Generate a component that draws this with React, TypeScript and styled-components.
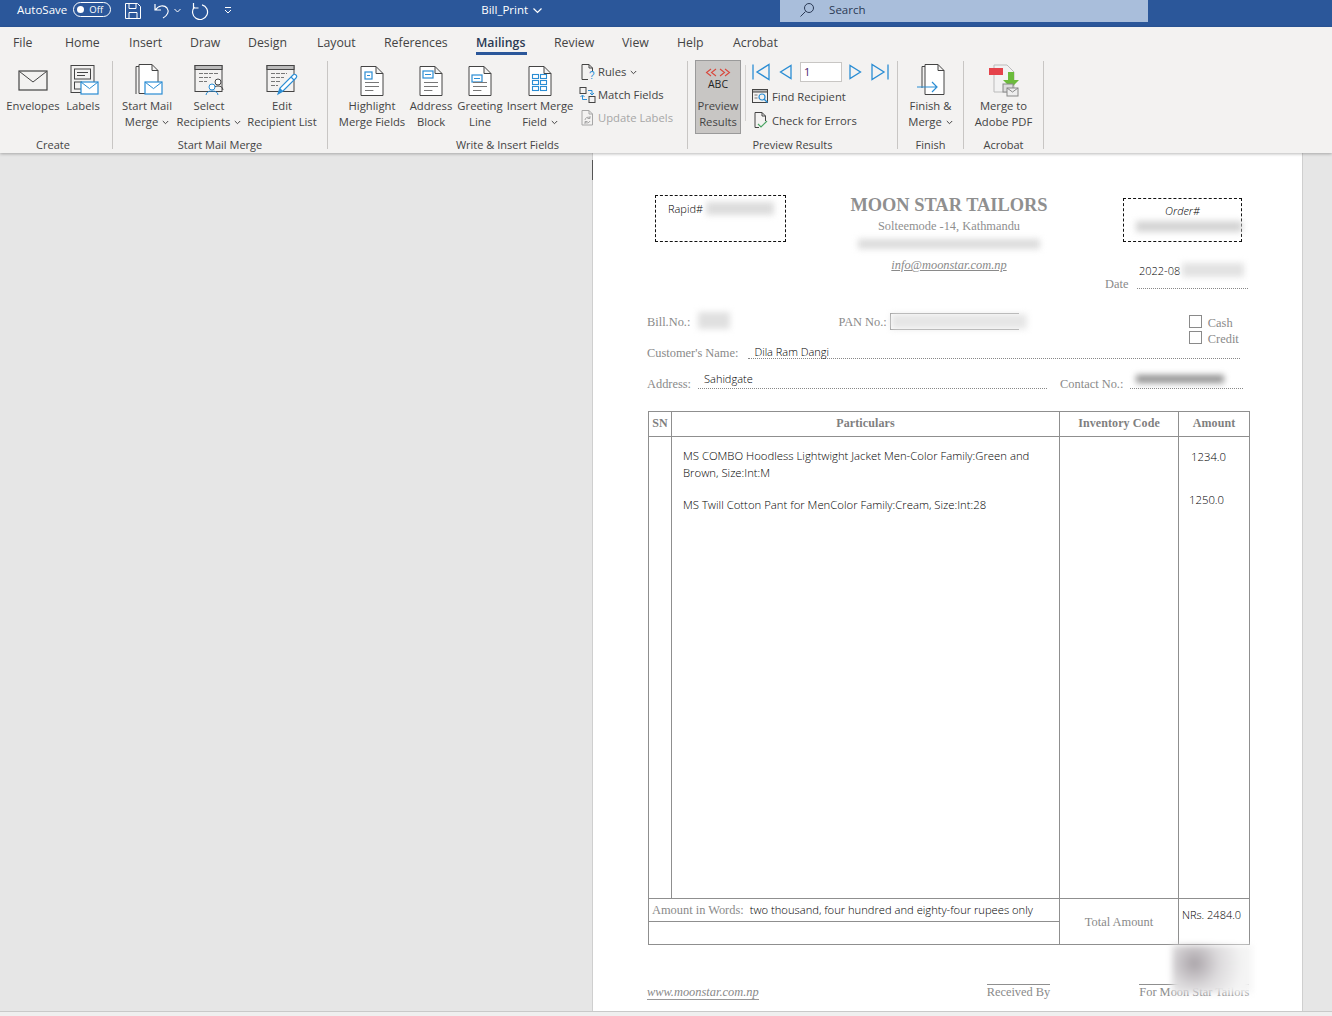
import React from "react";
import styled, { createGlobalStyle } from "styled-components";

const Global = createGlobalStyle`
  html, body { margin: 0; padding: 0; width: 1332px; height: 1016px; overflow: hidden; background: #e6e6e6; }
  * { box-sizing: border-box; }
`;
const UI = `"Open Sans", "Noto Sans", "Liberation Sans", sans-serif`;
const SERIF = `"Liberation Serif", "Times New Roman", serif`;
const INK = "#444";
const BLUE = "#2a8dd4";

const Shell = styled.div`
  width: 1332px; height: 1016px; display: flex; flex-direction: column; font-family: ${UI};
  overflow: hidden; background: #e6e6e6;
`;
const TitleBar = styled.header`
  height: 27px; flex: none; background: #2b579a; color: #fff; display: flex; align-items: flex-start;
  font-size: 11.5px; position: relative;
`;
const QuickText = styled.span<{ $ml: number }>`margin-left: ${(p) => p.$ml}px; line-height: 19px; white-space: nowrap;`;
const Toggle = styled.span`
  margin: 2px 0 0 6px; width: 38px; height: 15px; border: 1.2px solid #fff; border-radius: 8px;
  display: flex; align-items: center; padding-left: 3px; font-size: 9.5px; gap: 5px; flex: none;
`;
const Knob = styled.i`width: 7px; height: 7px; border-radius: 50%; background: #fff; display: block;`;
const QuickIcon = styled.svg<{ $ml: number; $w: number }>`
  margin: 2px 0 0 ${(p) => p.$ml}px; width: ${(p) => p.$w}px; height: 18px; flex: none;
`;
const SearchBox = styled.div`
  margin-left: 238px; width: 368px; height: 22px; background: #a9bedb; color: #2b3a55; display: flex;
  align-items: center; padding: 0 0 3px 19px; gap: 14px; font-size: 11.5px; flex: none;
`;

const Ribbon = styled.section`
  height: 126px; flex: none; background: #f3f2f1; box-shadow: 0 1px 3px rgba(0,0,0,.28); position: relative; z-index: 2;
`;
const Tabs = styled.nav`display: flex; height: 34px; padding-left: 13px; font-size: 12.3px; color: #444;`;
const Tab = styled.span<{ $w: number; $active?: boolean }>`
  width: ${(p) => p.$w}px; flex: none; line-height: 31px; position: relative; white-space: nowrap;
  font-weight: ${(p) => (p.$active ? 600 : 400)}; color: ${(p) => (p.$active ? "#2b3a55" : "#444")};
  ${(p) => p.$active && `&::after { content: ""; position: absolute; left: 0; top: 25px; width: 51px; height: 3px; background: #2b579a; }`}
`;
const Groups = styled.div`display: flex; height: 92px;`;
const Group = styled.div<{ $w: number }>`
  width: ${(p) => p.$w}px; flex: none; height: 88px; border-right: 1px solid #c8c6c4; display: flex; flex-direction: column;
`;
const GroupBody = styled.div`height: 77px; display: flex; flex: none;`;
const GroupLabel = styled.div<{ $pr?: number }>`
  text-align: center; font-size: 11px; line-height: 14px; color: #444; white-space: nowrap;
  padding-right: ${(p) => p.$pr ?? 0}px;
`;
const Big = styled.div<{ $w: number }>`
  width: ${(p) => p.$w}px; flex: none; display: flex; flex-direction: column; align-items: center;
  font-size: 11.25px; line-height: 16px; color: #444; white-space: nowrap; padding-top: 2px;
`;
const BigIcon = styled.svg`width: 36px; height: 34px; margin-bottom: 1px; flex: none;`;
const Chev = styled.svg`width: 7px; height: 5px; margin-left: 4px; vertical-align: 1px;`;
const SmallCol = styled.div<{ $ml: number }>`
  margin: -1px 0 0 ${(p) => p.$ml}px; display: flex; flex-direction: column; flex: none;
`;
const SmallRow = styled.div<{ $off?: boolean; $h?: number; $gap?: number }>`
  height: ${(p) => p.$h ?? 23}px; display: flex; align-items: center; gap: ${(p) => p.$gap ?? 2}px; font-size: 11.25px; white-space: nowrap;
  color: ${(p) => (p.$off ? "#a6a6a6" : "#444")};
`;
const SmallIcon = styled.svg`width: 17px; height: 18px; flex: none;`;
const PreviewBtn = styled.div`
  margin: -1px 0 0 7px; width: 46px; height: 74px; background: #c8c6c4; border: 1px solid #9a9a9a; flex: none;
  display: flex; flex-direction: column; align-items: center; font-size: 11.25px; line-height: 16px; color: #444; padding-top: 7px;
`;
const Abc = styled.span`font-size: 10.5px; line-height: 12px; color: #222; margin: 1px 0 8px;`;
const ThinSep = styled.i`display: block; width: 1px; height: 56px; margin: 4px 0 0 4px; background: #d5d3d1; flex: none;`;
const NavRow = styled.div`height: 24px; display: flex; align-items: center;`;
const NavIcon = styled.svg<{ $w: number; $ml: number }>`
  width: ${(p) => p.$w}px; margin-left: ${(p) => p.$ml}px; height: 18px; flex: none;
`;
const NavInput = styled.div`
  margin-left: 8px; width: 42px; height: 20px; background: #fff; border: 1px solid #c8c6c4; font-size: 11px;
  line-height: 18px; padding-left: 3px; color: #4b1d6b; flex: none;
`;

const Workspace = styled.main`flex: 1; display: flex; background: #e6e6e6; min-height: 0; padding-left: 592px;`;
const Page = styled.article`
  width: 711px; height: 858px; background: #fff; border-left: 1px solid #cfcfcf; border-right: 1px solid #cfcfcf; padding-left: 55px;
  flex: none; position: relative; font-family: ${SERIF}; font-size: 12.4px; color: #8a8a8a;
`;
const Ruler = styled.i`position: absolute; left: -1px; top: 7px; width: 1px; height: 20px; background: #555;`;
const StatusBar = styled.footer`height: 5px; flex: none; background: #efefef; border-top: 1px solid #c9c9c9; position: relative; z-index: 2;`;

const DocHead = styled.div`display: flex; height: 150px; width: 602px;`;
const DocLeft = styled.div`width: 138px; flex: none; padding: 42px 0 0 7px;`;
const Dashed = styled.div<{ $w: number; $h: number; $center?: boolean; $ml?: number }>`
  width: ${(p) => p.$w}px; height: ${(p) => p.$h}px; margin-left: ${(p) => p.$ml ?? 0}px; border: 1px dashed #111;
  font-family: ${UI}; font-weight: 300; font-size: 11px; color: #000;
  padding: ${(p) => (p.$center ? "4px 0 0 0" : "5px 0 0 12px")};
  display: flex; ${(p) => (p.$center ? "flex-direction: column; align-items: center;" : "align-items: flex-start;")}
`;
const Blur = styled.span<{ $w: number; $h: number; $ml?: number; $mt?: number; $c?: string }>`
  display: block; width: ${(p) => p.$w}px; height: ${(p) => p.$h}px; margin-left: ${(p) => p.$ml ?? 0}px; margin-top: ${(p) => p.$mt ?? 0}px;
  background: ${(p) => p.$c ?? "#dcdcdc"}; filter: blur(3px); flex: none;
`;
const DocCenter = styled.div`
  width: 314px; flex: none; padding: 41px 0 0 12px; display: flex; flex-direction: column; align-items: center;
`;
const Brand = styled.h1`margin: 0; font: bold 18.4px/22px ${SERIF}; color: #8f8f8f; white-space: nowrap;`;
const Addr = styled.div`line-height: 14px; margin-top: 3px; color: #8f8f8f;`;
const Mail = styled.div`font-style: italic; line-height: 14px; margin-top: 9px; text-decoration: underline; color: #8a8a8a;`;
const DocRight = styled.div`width: 150px; flex: none; padding-top: 45px;`;
const DateRow = styled.div`display: flex; align-items: flex-end; margin-top: 21px;`;
const DateLabel = styled.span`margin: 0 0 -2px 5px; width: 32px; line-height: 14px;`;
const DateField = styled.div`
  width: 111px; height: 26px; border-bottom: 1px dotted #888; display: flex; font-family: ${UI}; font-weight: 300;
  font-size: 11px; color: #000; padding-left: 2px; line-height: 16px; white-space: nowrap;
`;

const BillRow = styled.div`display: flex; height: 38px; width: 602px; padding-top: 12px; margin-left: -1px;`;
const Lbl = styled.span<{ $ml?: number; $drop?: number }>`
  margin-left: ${(p) => p.$ml ?? 0}px; white-space: nowrap; line-height: 14px; flex: none;
  margin-bottom: ${(p) => -(p.$drop ?? 0)}px;
`;
const PanBox = styled.div`
  width: 129px; height: 17px; margin: -2px 0 0 3px; border-top: 1px solid #999; border-bottom: 1px solid #999; border-left: 1px solid #999; flex: none;
`;
const CheckCol = styled.div<{ $ml: number }>`
  margin: 0 0 0 ${(p) => p.$ml}px; display: flex; flex-direction: column; gap: 3px; flex: none;
`;
const CheckLine = styled.div`display: flex; gap: 6px; height: 13px; line-height: 13px;`;
const CheckText = styled.span`margin-top: 2px;`;
const Box = styled.i`display: block; width: 13px; height: 13px; border: 1px solid #8a8a8a; flex: none;`;
const FieldRow = styled.div<{ $mt?: number }>`
  display: flex; width: 600px; margin: ${(p) => p.$mt ?? 0}px 0 0 -1px; align-items: flex-end;
`;
const Dots = styled.div<{ $w: number; $ml: number; $pt?: number; $pl?: number }>`
  width: ${(p) => p.$w}px; margin-left: ${(p) => p.$ml}px; flex: none; border-bottom: 1px dotted #888; height: 18px;
  padding: ${(p) => p.$pt ?? 0}px 0 0 ${(p) => p.$pl ?? 0}px;
  font-family: ${UI}; font-weight: 300; font-size: 11px; line-height: 15px; color: #000; white-space: nowrap; display: flex;
`;

const Sheet = styled.div`
  margin-top: 22px; width: 602px; height: 534px; border: 1px solid #8f8f8f; display: grid;
  grid-template-columns: 23px 388px 119px 1fr; grid-template-rows: 25px 462px 1fr;
`;
const Cell = styled.div<{ $head?: boolean; $end?: boolean }>`
  border-right: ${(p) => (p.$end ? "none" : "1px solid #8f8f8f")};
  border-bottom: 1px solid #8f8f8f;
  ${(p) => p.$head && `font-weight: bold; font-size: 12px; text-align: center; line-height: 23px; color: #7f7f7f; letter-spacing: .1px;`}
`;
const ItemText = styled.div<{ $mt: number; $ml: number }>`
  font-family: ${UI}; font-weight: 300; font-size: 11.33px; line-height: 17px; color: #000;
  margin: ${(p) => p.$mt}px 10px 0 ${(p) => p.$ml}px;
`;
const WordsCell = styled.div`
  grid-column: 1 / span 2; border-right: 1px solid #8f8f8f; display: grid; grid-template-rows: 23px 1fr;
`;
const WordsLine = styled.div`border-bottom: 1px solid #8f8f8f; padding-left: 3px; line-height: 22px; white-space: nowrap; display: flex; gap: 6px;`;
const Ink = styled.span`font-family: ${UI}; font-weight: 300; font-size: 11.2px; color: #000;`;
const TotalCell = styled.div`border-right: 1px solid #8f8f8f; text-align: center; line-height: 46px;`;
const NrsCell = styled.div`font-family: ${UI}; font-weight: 300; font-size: 11px; color: #000; padding: 8px 0 0 3px; white-space: nowrap;`;

const DocFoot = styled.div`display: flex; width: 603px; margin: 39px 0 0 -1px; align-items: flex-start;`;
const Site = styled.span`font-style: italic; margin-top: 1px; border-bottom: 1px solid #999; line-height: 14px; flex: none;`;
const Sign = styled.span<{ $ml: number }>`margin-left: ${(p) => p.$ml}px; border-top: 1px solid #8f8f8f; padding-top: 1px; line-height: 13px; white-space: nowrap; flex: none;`;
const Signature = styled.div`
  position: absolute; left: 579px; top: 792px; width: 80px; height: 48px; filter: blur(3px);
  background: radial-gradient(circle at 28% 38%, #aaa4a9 0, #dcdadc 38%, #f4f4f4 75%);
`;

const S = { fill: "none", stroke: INK, strokeWidth: 1 } as const;
const B = { fill: "none", stroke: BLUE, strokeWidth: 1 } as const;
const Down = () => (
  <Chev viewBox="0 0 7 5"><path d="M.8 1l2.7 2.7L6.2 1" {...S} /></Chev>
);
const Page1 = ({ x = 8, w = 22 }: { x?: number; w?: number }) => (
  <path d={`M${x} 3.5h${w - 7}l7 7v22h-${w}z M${x + w - 7} 3.5v7h7`} fill="#fff" stroke={INK} />
);
const Env = ({ x, y, w = 17, h = 12 }: { x: number; y: number; w?: number; h?: number }) => (
  <g>
    <rect x={x} y={y} width={w} height={h} fill="#fff" stroke={BLUE} strokeWidth="1.2" />
    <path d={`M${x} ${y}l${w / 2} ${h * 0.55}l${w / 2} -${h * 0.55}`} {...B} />
  </g>
);
const Lines = ({ x, ys, w }: { x: number; ys: number[]; w: number }) => (
  <g>{ys.map((y, i) => <path key={i} d={`M${x} ${y}h${i === ys.length - 1 ? w * 0.6 : w}`} {...S} stroke="#777" />)}</g>
);

const FieldDoc = ({ bx, by, bw }: { bx: number; by: number; bw: number }) => (
  <BigIcon viewBox="0 0 36 34">
    <Page1 x={7} />
    <rect x={bx} y={by} width={bw} height="7" fill="#fff" stroke={BLUE} strokeWidth="1.2" />
    <path d={`M${bx + 2} ${by + 3.5}h${bw - 4}`} {...B} />
    <Lines x={11} ys={[19.5, 23.5, 27.5]} w={14} />
  </BigIcon>
);

export default function App() {
  return (
    <Shell>
      <Global />
      <TitleBar>
        <QuickText $ml={17}>AutoSave</QuickText>
        <Toggle><Knob />Off</Toggle>
        <QuickIcon $ml={14} $w={16} viewBox="0 0 16 18" fill="none" stroke="#fff">
          <path d="M.5 1.5h12l3 3v12H.5z M4 1.5v5h7v-5 M4 16.5v-6h8v6" />
        </QuickIcon>
        <QuickIcon $ml={13} $w={16} viewBox="0 0 16 18" fill="none" stroke="#fff" strokeWidth="1.2">
          <path d="M1 2v6h6 M1.5 8C4 3.5 10 2.5 13 6c2.5 3.5.5 7.5-4 10" />
        </QuickIcon>
        <QuickIcon $ml={4} $w={7} viewBox="0 0 7 18" fill="none" stroke="#fff"><path d="M.5 7l3 3 3-3" /></QuickIcon>
        <QuickIcon $ml={10} $w={18} viewBox="0 0 18 18" fill="none" stroke="#fff" strokeWidth="1.2">
          <path d="M2.500 1v5h5 M3.500 5A7.500 7.500 0 1 0 11 2.800" />
        </QuickIcon>
        <QuickIcon $ml={15} $w={8} viewBox="0 0 8 18" fill="none" stroke="#fff"><path d="M1 5.5h6 M1 8l3 3 3-3" /></QuickIcon>
        <QuickText $ml={249}>Bill_Print</QuickText>
        <QuickIcon $ml={5} $w={9} viewBox="0 0 9 18" fill="none" stroke="#fff" strokeWidth="1.2"><path d="M.5 6.5l4 4 4-4" /></QuickIcon>
        <SearchBox>
          <svg width="16" height="16" viewBox="0 0 16 16" fill="none" stroke="#2b3a55"><circle cx="10" cy="6" r="4.5" /><path d="M6.5 9.5L1.5 14.5" /></svg>
          Search
        </SearchBox>
      </TitleBar>

      <Ribbon>
        <Tabs>
          <Tab $w={52}>File</Tab><Tab $w={64}>Home</Tab><Tab $w={61}>Insert</Tab><Tab $w={58}>Draw</Tab>
          <Tab $w={69}>Design</Tab><Tab $w={67}>Layout</Tab><Tab $w={92}>References</Tab>
          <Tab $w={78} $active>Mailings</Tab><Tab $w={68}>Review</Tab><Tab $w={55}>View</Tab>
          <Tab $w={56}>Help</Tab><Tab $w={60}>Acrobat</Tab>
        </Tabs>
        <Groups>
          <Group $w={113}>
            <GroupBody>
              <Big $w={66}>
                <BigIcon viewBox="0 0 36 34"><rect x="4" y="8" width="28" height="19" {...S} strokeWidth="1.2" /><path d="M4.5 8.5L18 19 31.5 8.5" {...S} /></BigIcon>
                Envelopes
              </Big>
              <Big $w={34}>
                <BigIcon viewBox="0 0 36 34">
                  <rect x="6" y="2.5" width="23" height="27" {...S} /><rect x="9.5" y="6" width="16" height="10" {...S} />
                  <path d="M12 9.5h11 M12 12.5h8" {...S} /><rect x="9.5" y="19" width="7" height="7" {...S} />
                  <Env x={16} y={19} w={17} h={12} />
                </BigIcon>
                Labels
              </Big>
            </GroupBody>
            <GroupLabel $pr={6}>Create</GroupLabel>
          </Group>
          <Group $w={215}>
            <GroupBody>
              <Big $w={68}>
                <BigIcon viewBox="0 0 36 34">
                  <path d="M7 31V3.5h3" {...S} /><path d="M10 1.5h13l6 6v23H10z M23 1.5v6h6" fill="#fff" stroke={INK} />
                  <Env x={16} y={19} w={17} h={12} />
                </BigIcon>
                Start Mail<span>Merge<Down /></span>
              </Big>
              <Big $w={56}>
                <BigIcon viewBox="0 0 36 34">
                  <rect x="4" y="2.5" width="27" height="26" {...S} /><rect x="4" y="2.5" width="27" height="4" fill="#bbb" stroke={INK} />
                  <path d="M8 10.5h19 M8 14.5h12 M8 18.5h8" stroke="#777" strokeDasharray="4 1" fill="none" />
                  <circle cx="27" cy="19" r="3" fill="#fff" stroke={INK} /><path d="M22 27c.5-3 2-4 5-4s4.500 1 5 4" {...S} />
                  <circle cx="21" cy="24" r="3" fill="#fff" stroke={BLUE} /><path d="M15 32c.5-3 2.500-4 6-4s5.500 1 6 4" {...B} />
                </BigIcon>
                Select<span>Recipients<Down /></span>
              </Big>
              <Big $w={90}>
                <BigIcon viewBox="0 0 36 34">
                  <rect x="3" y="2.5" width="27" height="26" {...S} /><rect x="3" y="2.5" width="27" height="4" fill="#bbb" stroke={INK} />
                  <path d="M7 10.5h16 M7 14.500h13 M7 18.500h10 M7 22.500h7" stroke="#777" strokeDasharray="4 1" fill="none" />
                  <path d="M14 31l2-6 13-13c2-2 5 1 3 3L19 28z M27 14l3 3" fill="#fff" stroke={BLUE} strokeWidth="1.1" />
                  <path d="M14 31l2-6 3 3z" fill={BLUE} />
                </BigIcon>
                Edit<span>Recipient List</span>
              </Big>
            </GroupBody>
            <GroupLabel>Start Mail Merge</GroupLabel>
          </Group>
          <Group $w={360}>
            <GroupBody>
              <Big $w={88}>
                <FieldDoc bx={11} by={9} bw={7} />
                Highlight<span>Merge Fields</span>
              </Big>
              <Big $w={30}>
                <FieldDoc bx={10} by={8} bw={10} />
                Address<span>Block</span>
              </Big>
              <Big $w={68}>
                <FieldDoc bx={10} by={12} bw={10} />
                Greeting<span>Line</span>
              </Big>
              <Big $w={52}>
                <BigIcon viewBox="0 0 36 34">
                  <Page1 x={7} />
                  <g fill="none" stroke={BLUE} strokeWidth="1.1">
                    <rect x="10.500" y="11.500" width="6" height="4" /><rect x="18.500" y="11.500" width="6" height="4" />
                    <rect x="10.500" y="17.500" width="6" height="4" /><rect x="18.500" y="17.500" width="6" height="4" />
                    <rect x="10.500" y="23.500" width="6" height="4" /><rect x="18.500" y="23.500" width="6" height="4" />
                  </g>
                </BigIcon>
                Insert Merge<span>Field<Down /></span>
              </Big>
              <SmallCol $ml={13}>
                <SmallRow $h={23}>
                  <SmallIcon viewBox="0 0 17 18"><path d="M3 1.500h7l3.500 3.500v3 M3 1.500v15h6 M10 1.500v3.500h3.500" {...S} /><text x="10" y="16" fontSize="10" fill={BLUE} fontFamily="Liberation Sans">?</text></SmallIcon>
                  <span>Rules<Down /></span>
                </SmallRow>
                <SmallRow>
                  <SmallIcon viewBox="0 0 17 18">
                    <rect x="1" y="1.500" width="6" height="6" {...S} /><rect x="10" y="10.500" width="6" height="6" {...S} />
                    <path d="M9 4.500h4v4 M11 7l2 2 2-2 M8 13.500H3.500v-4 M1.500 11l2-2 2 2" {...B} />
                  </SmallIcon>
                  Match Fields
                </SmallRow>
                <SmallRow $off $h={23}>
                  <SmallIcon viewBox="0 0 17 18" fill="none" stroke="#a6a6a6">
                    <path d="M3 1.500h7l3.500 3.500v11H3z M10 1.500v3.500h3.500" /><path d="M6 11a3 3 0 0 1 5-2 M11 12a3 3 0 0 1-5 1 M11 7v2.500H8.500 M6 15v-2.500h2.500" />
                  </SmallIcon>
                  Update Labels
                </SmallRow>
              </SmallCol>
            </GroupBody>
            <GroupLabel>Write &amp; Insert Fields</GroupLabel>
          </Group>
          <Group $w={210}>
            <GroupBody>
              <PreviewBtn>
                <svg width="26" height="9" viewBox="0 0 26 9" fill="none" stroke="#d9473c" strokeWidth="1.1">
                  <path d="M6 1L1.500 4.500 6 8 M11 1L6.500 4.500 11 8 M15 1l4.500 3.500L15 8 M20 1l4.500 3.500L20 8" />
                </svg>
                <Abc>ABC</Abc>
                Preview<span>Results</span>
              </PreviewBtn>
              <ThinSep />
              <SmallCol $ml={6}>
                <NavRow>
                  <NavIcon $ml={0} $w={18} viewBox="0 0 18 18" {...B} strokeWidth="1.3"><path d="M1 1.500v15 M17 1.500v15L5 9z" /></NavIcon>
                  <NavIcon $ml={9} $w={13} viewBox="0 0 13 18" {...B} strokeWidth="1.3"><path d="M12 2.500v13L1.500 9z" /></NavIcon>
                  <NavInput>1</NavInput>
                  <NavIcon $ml={7} $w={13} viewBox="0 0 13 18" {...B} strokeWidth="1.3"><path d="M1 2.500v13L11.500 9z" /></NavIcon>
                  <NavIcon $ml={9} $w={18} viewBox="0 0 18 18" {...B} strokeWidth="1.3"><path d="M17 1.500v15 M1 1.500v15L13 9z" /></NavIcon>
                </NavRow>
                <SmallRow $h={24} $gap={3}>
                  <SmallIcon viewBox="0 0 17 18">
                    <rect x=".5" y="2.500" width="15" height="13" {...S} /><rect x=".5" y="2.500" width="15" height="2.500" fill="#bbb" stroke={INK} />
                    <path d="M2.500 8h3 M2.500 11h3" stroke="#777" fill="none" />
                    <circle cx="10" cy="10" r="3" {...B} strokeWidth="1.2" /><path d="M12 12l3.500 3.500" {...B} strokeWidth="1.4" />
                  </SmallIcon>
                  <span>Find Recipient</span>
                </SmallRow>
                <SmallRow $h={24} $gap={3}>
                  <SmallIcon viewBox="0 0 17 18">
                    <path d="M3 1.500h7l3.500 3.500v5 M3 1.500v15h4 M10 1.500v3.500h3.500" {...S} />
                    <path d="M6 13l3 3 6-6" fill="none" stroke="#4aa564" strokeWidth="1.2" />
                  </SmallIcon>
                  <span>Check for Errors</span>
                </SmallRow>
              </SmallCol>
            </GroupBody>
            <GroupLabel>Preview Results</GroupLabel>
          </Group>
          <Group $w={66}>
            <GroupBody>
              <Big $w={65}>
                <BigIcon viewBox="0 0 36 34">
                  <path d="M9 25V3.500h3" {...S} /><path d="M12 1.500h13l6 6v24H12z M25 1.500v6h6" fill="#fff" stroke={INK} />
                  <path d="M4 24h19 M19 19l5 5-5 5" fill="none" stroke={BLUE} strokeWidth="1.2" />
                </BigIcon>
                Finish &amp;<span>Merge<Down /></span>
              </Big>
            </GroupBody>
            <GroupLabel>Finish</GroupLabel>
          </Group>
          <Group $w={80}>
            <GroupBody>
              <Big $w={79}>
                <BigIcon viewBox="0 0 36 34">
                  <path d="M8 2h13l7 7v20H8z" fill="#f2f2f2" stroke="#bbb" />
                  <rect x="3" y="5" width="14" height="7" fill="#e5434b" />
                  <path d="M22 9h6v8h5l-8 8-8-8h5z" fill="#6cbb3c" />
                  <rect x="17" y="21" width="10" height="8" fill="#ddd" stroke="#888" /><rect x="21" y="25" width="11" height="8" fill="#eee" stroke="#888" />
                  <path d="M21 25l5.500 4 5.500-4" fill="none" stroke="#888" />
                </BigIcon>
                Merge to<span>Adobe PDF</span>
              </Big>
            </GroupBody>
            <GroupLabel>Acrobat</GroupLabel>
          </Group>
        </Groups>
      </Ribbon>

      <Workspace>
        <Page>
          <Ruler />
          <DocHead>
            <DocLeft>
              <Dashed $w={131} $h={47}>Rapid#<Blur $w={68} $h={13} $ml={3} $mt={1} /></Dashed>
            </DocLeft>
            <DocCenter>
              <Brand>MOON STAR TAILORS</Brand>
              <Addr>Solteemode -14, Kathmandu</Addr>
              <Blur $w={182} $h={10} $mt={6} />
              <Mail>info@moonstar.com.np</Mail>
            </DocCenter>
            <DocRight>
              <Dashed $w={119} $h={44} $center $ml={23}>
                <em>Order#</em>
                <Blur $w={106} $h={11} $ml={12} $mt={3} $c="#d4d4d4" />
              </Dashed>
              <DateRow>
                <DateLabel>Date</DateLabel>
                <DateField>2022-08<Blur $w={62} $h={14} $ml={2} $c="#e2e2e2" /></DateField>
              </DateRow>
            </DocRight>
          </DocHead>
          <BillRow>
            <Lbl>Bill.No.:</Lbl>
            <Blur $w={32} $h={17} $ml={8} $mt={-3} $c="#e0e0e0" />
            <Lbl $ml={108}>PAN No.:</Lbl>
            <PanBox><Blur $w={136} $h={15} $c="#e6e6e6" /></PanBox>
            <CheckCol $ml={170}>
              <CheckLine><Box /><CheckText>Cash</CheckText></CheckLine>
              <CheckLine><Box /><CheckText>Credit</CheckText></CheckLine>
            </CheckCol>
          </BillRow>
          <FieldRow>
            <Lbl $drop={1}>Customer's Name:</Lbl>
            <Dots $w={492} $ml={10} $pt={3} $pl={6}>Dila Ram Dangi</Dots>
          </FieldRow>
          <FieldRow $mt={12}>
            <Lbl $drop={2}>Address:</Lbl>
            <Dots $w={349} $ml={7} $pl={6}>Sahidgate</Dots>
            <Lbl $drop={2} $ml={13}>Contact No.:</Lbl>
            <Dots $w={113} $ml={7}><Blur $w={88} $h={8} $ml={6} $mt={4} $c="#8f8f8f" /></Dots>
          </FieldRow>
          <Sheet>
            <Cell $head>SN</Cell>
            <Cell $head>Particulars</Cell>
            <Cell $head>Inventory Code</Cell>
            <Cell $head $end>Amount</Cell>
            <Cell />
            <Cell>
              <ItemText $mt={10} $ml={11}>MS COMBO Hoodless Lightwight Jacket Men-Color Family:Green and Brown, Size:Int:M</ItemText>
              <ItemText $mt={15} $ml={11}>MS Twill Cotton Pant for MenColor Family:Cream, Size:Int:28</ItemText>
            </Cell>
            <Cell />
            <Cell $end>
              <ItemText $mt={11} $ml={12}>1234.0</ItemText>
              <ItemText $mt={26} $ml={10}>1250.0</ItemText>
            </Cell>
            <WordsCell>
              <WordsLine>Amount in Words:<Ink>two thousand, four hundred and eighty-four rupees only</Ink></WordsLine>
            </WordsCell>
            <TotalCell>Total Amount</TotalCell>
            <NrsCell>NRs. 2484.0</NrsCell>
          </Sheet>
          <DocFoot>
            <Site>www.moonstar.com.np</Site>
            <Sign $ml={228}>Received By</Sign>
            <Sign $ml={89}>For Moon Star Tailors</Sign>
          </DocFoot>
          <Signature />
        </Page>
      </Workspace>
      <StatusBar />
    </Shell>
  );
}
